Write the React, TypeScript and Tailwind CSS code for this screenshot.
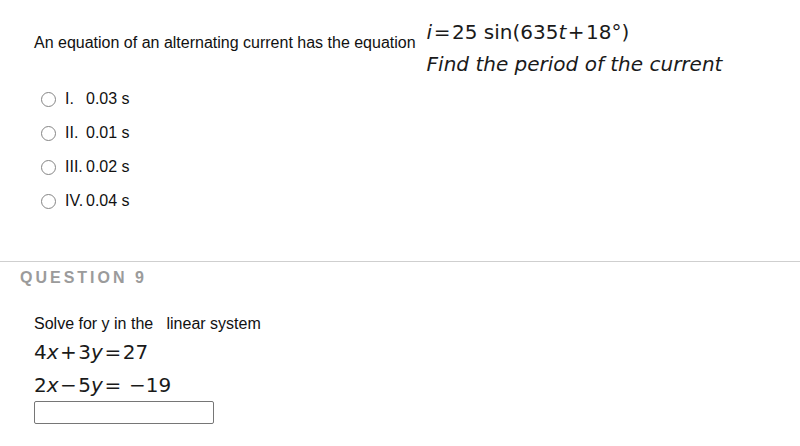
const sans = { fontFamily: '"Liberation Sans", Arial, sans-serif' };

function MathLine({ children, className = '' }: { children: React.ReactNode; className?: string }) {
  return (
    <div className={`font-['DejaVu_Sans',sans-serif] text-[20px] leading-[20px] text-[#1a1a1a] whitespace-nowrap ${className}`}>
      {children}
    </div>
  );
}

// operator with a little math spacing around it
function Op({ children }: { children: React.ReactNode }) {
  return <span className="mx-[1.5px]">{children}</span>;
}

const options = [
  { label: 'I.', value: '0.03 s' },
  { label: 'II.', value: '0.01 s' },
  { label: 'III.', value: '0.02 s' },
  { label: 'IV.', value: '0.04 s' },
];

export default function App() {
  return (
    <div className="w-[800px] h-[446px] bg-white text-[#111] overflow-hidden" style={sans}>
      {/* question 8 */}
      <div className="pl-[34px] pt-[22px]">
        <div className="flex items-start">
          <span className="text-[16px] leading-[18px] mt-[12px] mr-[11px] whitespace-nowrap">
            An equation of an alternating current has the equation
          </span>
          <div className="flex flex-col">
            <MathLine>
              <i>i</i>
              <Op>=</Op>25 sin(635<i>t</i>
              <Op>+</Op>18°)
            </MathLine>
            <MathLine className="italic mt-[12px]">Find the period of the current</MathLine>
          </div>
        </div>

        <div className="mt-[16px] flex flex-col gap-[16px] pl-[7px]">
          {options.map((o) => (
            <label key={o.label} className="flex items-center h-[18px] text-[16px] leading-[18px]">
              <span className="w-[15px] h-[15px] rounded-full border border-[#858585] bg-white shrink-0" />
              <span className="ml-[9px] w-[21px]">{o.label}</span>
              <span>{o.value}</span>
            </label>
          ))}
        </div>
      </div>

      {/* question 9 */}
      <div className="mt-[51px] border-t border-[#cfcfcf]">
        <div className="pl-[20px] pt-[8px] text-[16px] leading-[16px] font-bold tracking-[3px] text-[#9b9b9b]">
          QUESTION 9
        </div>
        <div className="pl-[34px]">
          <div className="mt-[29px] text-[16px] leading-[18px] whitespace-nowrap">
            Solve for y in the&nbsp;&nbsp; linear system
          </div>
          <MathLine className="mt-[9px]">
            4<i>x</i>
            <Op>+</Op>3<i>y</i>
            <Op>=</Op>27
          </MathLine>
          <MathLine className="mt-[13px]">
            2<i>x</i>
            <Op>−</Op>5<i>y</i>
            <Op>=</Op> −19
          </MathLine>
          <input
            type="text"
            aria-label="answer"
            className="mt-[6px] block w-[180px] h-[23px] border border-[#767676] rounded-[2px] bg-white outline-none"
          />
        </div>
      </div>
    </div>
  );
}
